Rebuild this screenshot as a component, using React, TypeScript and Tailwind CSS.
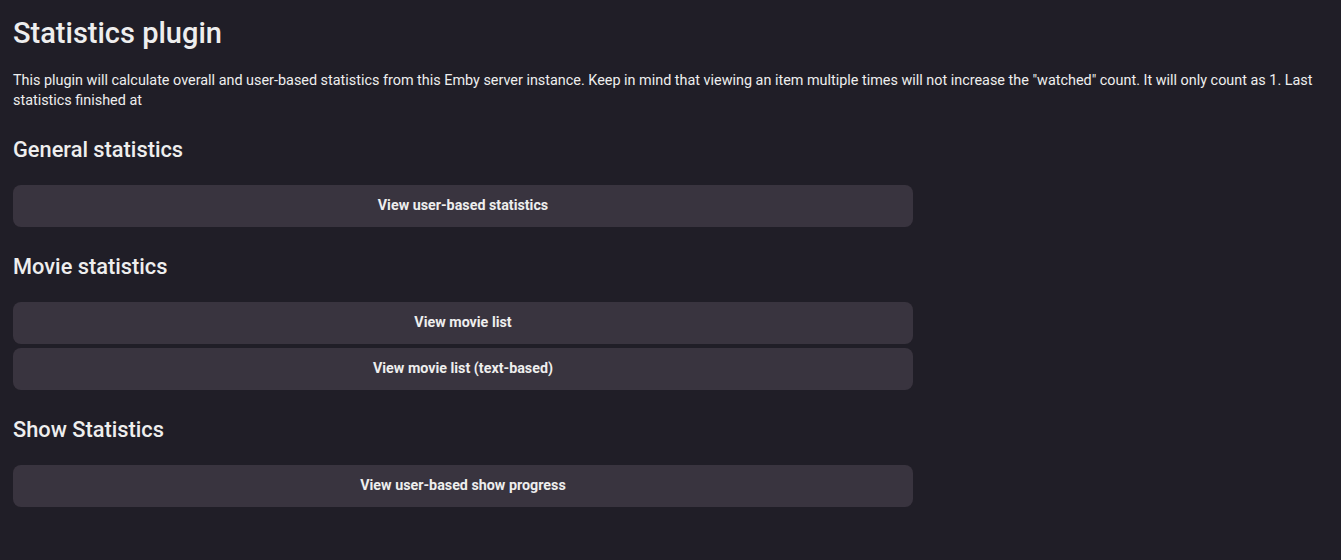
const sections = [
  { title: 'General statistics', buttons: ['View user-based statistics'] },
  { title: 'Movie statistics', buttons: ['View movie list', 'View movie list (text-based)'] },
  { title: 'Show Statistics', buttons: ['View user-based show progress'] },
];

const ActionButton = ({ label }: { label: string }) => (
  <button
    type="button"
    className="w-full h-[42px] rounded-lg bg-[#39343f] text-[#eeeeee] text-[14.3px] font-bold flex items-center justify-center"
  >
    {label}
  </button>
);

export default function App() {
  return (
    <div
      className="min-h-[560px] bg-[#201e27] text-[#eeeeee] px-[13px] pt-[14px] pb-8"
      style={{ fontFamily: 'Roboto, "Noto Sans", sans-serif' }}
    >
      <h1 className="text-[29px] font-medium leading-[38px]">Statistics plugin</h1>
      <p className="mt-[19px] text-[14.4px] leading-[20px]">
        This plugin will calculate overall and user-based statistics from this Emby server instance. Keep in mind that
        viewing an item multiple times will not increase the "watched" count. It will only count as 1. Last statistics
        finished at
      </p>
      <div className="w-[900px]">
        {sections.map((s, i) => (
          <section key={s.title} className={i === 0 ? 'mt-[24px]' : 'mt-[25px]'}>
            <h2 className="text-[21.8px] font-medium leading-[30px] mb-[20px]">{s.title}</h2>
            <div className="flex flex-col gap-[4px]">
              {s.buttons.map((b) => (
                <ActionButton key={b} label={b} />
              ))}
            </div>
          </section>
        ))}
      </div>
    </div>
  );
}
